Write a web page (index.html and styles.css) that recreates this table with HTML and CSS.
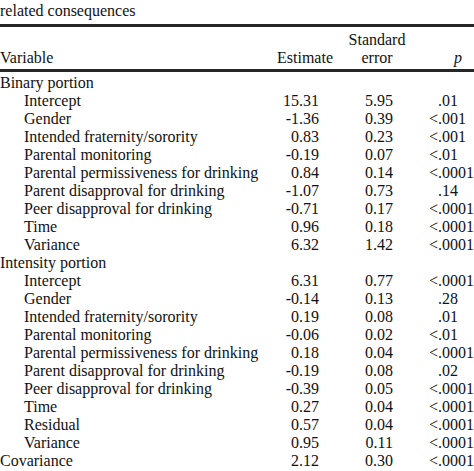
FILE: index.html
```html
<!DOCTYPE html>
<html>
<head>
<meta charset="utf-8">
<link rel="stylesheet" href="styles.css">
</head>
<body>
<div class="caption">related consequences</div>
<hr class="rule">
<table class="results">
  <colgroup>
    <col class="c-var">
    <col class="c-est">
    <col class="c-se">
    <col class="c-p">
  </colgroup>
  <thead>
    <tr>
      <th class="h-var">Variable</th>
      <th class="h-est">Estimate</th>
      <th class="h-se">Standard<br>error</th>
      <th class="h-p"><i>p</i></th>
    </tr>
  </thead>
</table>
<hr class="rule">
<table class="results body-rows">
  <colgroup>
    <col class="c-var">
    <col class="c-est">
    <col class="c-se">
    <col class="c-p">
  </colgroup>
  <tbody>
    <tr><td class="grp" colspan="4">Binary portion</td></tr>
    <tr><td class="var">Intercept</td><td class="est">15.31</td><td class="se">5.95</td><td class="p"><span class="nolt">.01</span></td></tr>
    <tr><td class="var">Gender</td><td class="est">-1.36</td><td class="se">0.39</td><td class="p">&lt;.001</td></tr>
    <tr><td class="var">Intended fraternity/sorority</td><td class="est">0.83</td><td class="se">0.23</td><td class="p">&lt;.001</td></tr>
    <tr><td class="var">Parental monitoring</td><td class="est">-0.19</td><td class="se">0.07</td><td class="p">&lt;.01</td></tr>
    <tr><td class="var">Parental permissiveness for drinking</td><td class="est">0.84</td><td class="se">0.14</td><td class="p">&lt;.0001</td></tr>
    <tr><td class="var">Parent disapproval for drinking</td><td class="est">-1.07</td><td class="se">0.73</td><td class="p"><span class="nolt">.14</span></td></tr>
    <tr><td class="var">Peer disapproval for drinking</td><td class="est">-0.71</td><td class="se">0.17</td><td class="p">&lt;.0001</td></tr>
    <tr><td class="var">Time</td><td class="est">0.96</td><td class="se">0.18</td><td class="p">&lt;.0001</td></tr>
    <tr><td class="var">Variance</td><td class="est">6.32</td><td class="se">1.42</td><td class="p">&lt;.0001</td></tr>
    <tr><td class="grp" colspan="4">Intensity portion</td></tr>
    <tr><td class="var">Intercept</td><td class="est">6.31</td><td class="se">0.77</td><td class="p">&lt;.0001</td></tr>
    <tr><td class="var">Gender</td><td class="est">-0.14</td><td class="se">0.13</td><td class="p"><span class="nolt">.28</span></td></tr>
    <tr><td class="var">Intended fraternity/sorority</td><td class="est">0.19</td><td class="se">0.08</td><td class="p"><span class="nolt">.01</span></td></tr>
    <tr><td class="var">Parental monitoring</td><td class="est">-0.06</td><td class="se">0.02</td><td class="p">&lt;.01</td></tr>
    <tr><td class="var">Parental permissiveness for drinking</td><td class="est">0.18</td><td class="se">0.04</td><td class="p">&lt;.0001</td></tr>
    <tr><td class="var">Parent disapproval for drinking</td><td class="est">-0.19</td><td class="se">0.08</td><td class="p"><span class="nolt">.02</span></td></tr>
    <tr><td class="var">Peer disapproval for drinking</td><td class="est">-0.39</td><td class="se">0.05</td><td class="p">&lt;.0001</td></tr>
    <tr><td class="var">Time</td><td class="est">0.27</td><td class="se">0.04</td><td class="p">&lt;.0001</td></tr>
    <tr><td class="var">Residual</td><td class="est">0.57</td><td class="se">0.04</td><td class="p">&lt;.0001</td></tr>
    <tr><td class="var">Variance</td><td class="est">0.95</td><td class="se">0.11</td><td class="p">&lt;.0001</td></tr>
    <tr><td class="grp">Covariance</td><td class="est">2.12</td><td class="se">0.30</td><td class="p">&lt;.0001</td></tr>
  </tbody>
</table>
</body>
</html>
```
FILE: styles.css
```css
html, body {
  margin: 0;
  padding: 0;
  background: #ffffff;
}

body {
  font-family: "Liberation Serif", "Times New Roman", serif;
  font-size: 16px;
  line-height: 18px;
  color: #111111;
  width: 474px;
  overflow: hidden;
}

.caption {
  padding-top: 2px;
  height: 16px;
  margin-bottom: 6px;
  white-space: nowrap;
}

.rule {
  display: block;
  width: 474px;
  height: 3px;
  margin: 0;
  padding: 0;
  border: none;
  background-color: #262626;
}

.results {
  width: 474px;
  border-collapse: separate;
  border-spacing: 0;
  table-layout: fixed;
}

.results thead {
  height: 42px;
}

.body-rows {
  margin-top: 2px;
}

.c-var { width: 270px; }
.c-est { width: 68px; }
.c-se { width: 78px; }
.c-p { width: 58px; }

.results th,
.results td {
  padding: 0;
  font-weight: normal;
  white-space: nowrap;
  line-height: 18px;
  height: 18px;
}

.results thead th {
  padding-top: 4px;
  padding-bottom: 2px;
  vertical-align: bottom;
}

.results .h-var { text-align: left; }
.results .h-est { text-align: right; padding-right: 5px; }
.results .h-se { text-align: center; }
.results .h-p { text-align: left; padding-left: 38px; }

.results .grp { text-align: left; }
.results .var { text-align: left; padding-left: 24px; }
.results .est { text-align: right; padding-right: 19px; }
.results .se { text-align: right; padding-right: 23px; }
.results .p { text-align: left; padding-left: 13px; }

.nolt { padding-left: 0.564em; }
```
